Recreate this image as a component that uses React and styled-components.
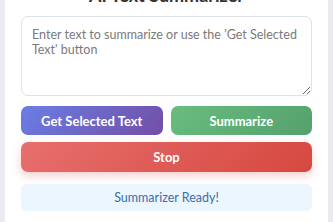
import React from "react";
import styled, { createGlobalStyle } from "styled-components";

const Global = createGlobalStyle`
  html, body { margin: 0; padding: 0; background: #e9ebf0; overflow: hidden; }
  body { font-family: "Lato", "Liberation Sans", Arial, sans-serif; }
  * { box-sizing: border-box; }
`;

const Page = styled.div`
  padding: 0 5px;
`;

const Card = styled.div`
  background: #ffffff;
  margin-top: -33px;
  padding: 16px 16px 30px;
  border-radius: 10px;
  display: flex;
  flex-direction: column;
`;

const Title = styled.h1`
  margin: 0 0 9px;
  font-family: "Lato", "Liberation Sans", Arial, sans-serif;
  font-size: 18px;
  line-height: 24px;
  font-weight: 700;
  color: #333;
  text-align: center;
`;

const Input = styled.textarea`
  display: block;
  width: 100%;
  height: 80px;
  flex: none;
  padding: 10px;
  border: 1px solid #dde3ea;
  border-radius: 7px;
  font-family: "Lato", "Open Sans", sans-serif;
  font-size: 12.5px;
  line-height: 15px;
  color: #333;
  resize: vertical;
  outline: none;
  &::placeholder { color: #7a7a7a; }
`;

const Row = styled.div`
  display: flex;
  gap: 8px;
  margin-top: 10px;
`;

const Button = styled.button`
  flex: 1;
  height: ${(p) => p.$h || 29}px;
  border: none;
  border-radius: 7px;
  color: #fff;
  font-family: "Lato", "Liberation Sans", Arial, sans-serif;
  font-weight: 700;
  font-size: 13px;
  background: ${(p) => p.$bg};
  box-shadow: ${(p) => p.$shadow || "none"};
  cursor: pointer;
`;

const StopButton = styled(Button)`
  flex: none;
  width: 100%;
  margin-top: 7px;
`;

const Status = styled.div`
  margin-top: 12px;
  height: 27px;
  flex: none;
  border-radius: 6px;
  background: #ecf6fe;
  color: #3d6ea8;
  font-family: "Lato", "DejaVu Sans", sans-serif;
  font-size: 12.5px;
  display: flex;
  align-items: center;
  justify-content: center;
`;

export default function App() {
  return (
    <>
      <Global />
      <Page>
        <Card>
          <Title>AI Text Summarizer</Title>
          <Input placeholder="Enter text to summarize or use the 'Get Selected Text' button" />
          <Row>
            <Button $bg="linear-gradient(135deg, #6a7ee6 0%, #734ea6 100%)">Get Selected Text</Button>
            <Button $bg="linear-gradient(135deg, #68bd7d 0%, #55a06e 100%)">Summarize</Button>
          </Row>
          <StopButton
            $h={30}
            $bg="linear-gradient(135deg, #e76f6d 0%, #d6483f 100%)"
            $shadow="0 4px 10px rgba(214, 72, 63, 0.25)"
          >
            Stop
          </StopButton>
          <Status>Summarizer Ready!</Status>
        </Card>
      </Page>
    </>
  );
}
